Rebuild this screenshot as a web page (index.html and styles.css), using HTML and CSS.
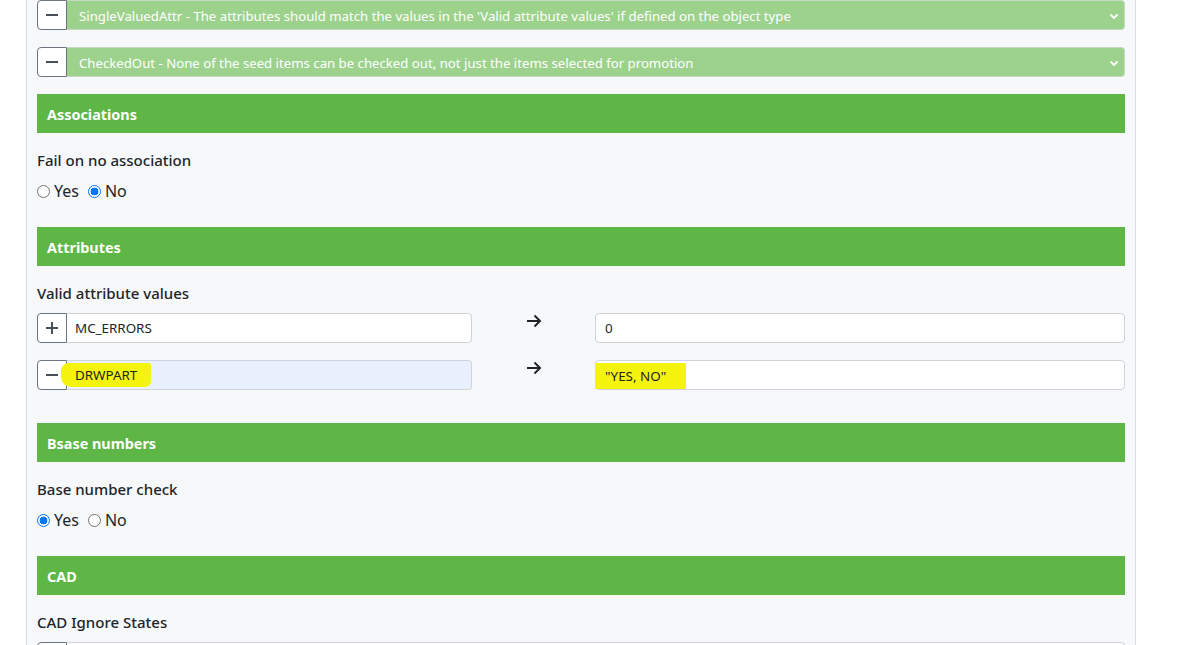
FILE: index.html
```html
<!DOCTYPE html>
<html>
<head>
<meta charset="utf-8">
<link rel="stylesheet" href="styles.css">
</head>
<body>
<div class="panel">
  <div class="rule-row">
    <button class="btn-side"><span class="minus"></span></button>
    <div class="rule-select">SingleValuedAttr - The attributes should match the values in the 'Valid attribute values' if defined on the object type<svg class="chev" width="10" height="8" viewBox="0 0 10 8"><path d="M1.5 2.5 L5 6 L8.5 2.5" fill="none" stroke="#fff" stroke-width="1.8"/></svg></div>
  </div>
  <div class="rule-row">
    <button class="btn-side"><span class="minus"></span></button>
    <div class="rule-select">CheckedOut - None of the seed items can be checked out, not just the items selected for promotion<svg class="chev" width="10" height="8" viewBox="0 0 10 8"><path d="M1.5 2.5 L5 6 L8.5 2.5" fill="none" stroke="#fff" stroke-width="1.8"/></svg></div>
  </div>

  <div class="section-head">Associations</div>
  <div class="field">
    <div class="label">Fail on no association</div>
    <div class="radios">
      <label class="radio"><span class="rb"></span>Yes</label>
      <label class="radio"><span class="rb on"></span>No</label>
    </div>
  </div>

  <div class="section-head">Attributes</div>
  <div class="field">
    <div class="label">Valid attribute values</div>
    <div class="attr-row">
      <div class="group">
        <button class="btn-side"><span class="plus"></span></button>
        <div class="input">MC_ERRORS</div>
      </div>
      <div class="arrow"><svg width="16" height="14" viewBox="0 0 16 14"><path d="M1 7 H14 M8.5 1.5 L14 7 L8.5 12.5" fill="none" stroke="#212529" stroke-width="2"/></svg></div>
      <div class="input wide">0</div>
    </div>
    <div class="attr-row">
      <div class="group">
        <button class="btn-side"><span class="minus"></span></button>
        <div class="input auto"><span class="hl hl-left">DRWPART</span></div>
      </div>
      <div class="arrow"><svg width="16" height="14" viewBox="0 0 16 14"><path d="M1 7 H14 M8.5 1.5 L14 7 L8.5 12.5" fill="none" stroke="#212529" stroke-width="2"/></svg></div>
      <div class="input wide"><span class="hl hl-right">"YES, NO"</span></div>
    </div>
  </div>

  <div class="section-head">Bsase numbers</div>
  <div class="field">
    <div class="label">Base number check</div>
    <div class="radios">
      <label class="radio"><span class="rb on"></span>Yes</label>
      <label class="radio"><span class="rb"></span>No</label>
    </div>
  </div>

  <div class="section-head">CAD</div>
  <div class="field">
    <div class="label">CAD Ignore States</div>
    <div class="attr-row">
      <div class="group full">
        <button class="btn-side"><span class="plus"></span></button>
        <div class="input"></div>
      </div>
    </div>
  </div>
</div>
</body>
</html>
```
FILE: styles.css
```css
* { box-sizing: border-box; }
html, body { margin: 0; padding: 0; background: #fff; }
body {
  font-family: "Noto Sans", "Open Sans", sans-serif;
  color: #212529;
  height: 645px;
  overflow: hidden;
}
.panel {
  margin-left: 26px;
  width: 1110px;
  min-height: 700px;
  background: #f7f8fa;
  border-left: 1px solid #dadcdf;
  border-right: 1px solid #dadcdf;
  padding: 0 10px 0 10px;
}
.rule-row {
  display: flex;
  height: 30px;
  margin-bottom: 17px;
}
.btn-side {
  width: 30px;
  height: 30px;
  flex: none;
  border: 1px solid #6c757d;
  border-radius: 4px 0 0 4px;
  background: #fff;
  padding: 0;
  display: flex;
  align-items: center;
  justify-content: center;
  position: relative;
  z-index: 0;
}
.minus {
  display: block;
  width: 12px;
  height: 2px;
  background: #495057;
}
.plus {
  display: block;
  width: 12px;
  height: 12px;
  position: relative;
}
.plus::before, .plus::after {
  content: "";
  position: absolute;
  background: #495057;
}
.plus::before { left: 0; top: 5px; width: 12px; height: 2px; }
.plus::after { left: 5px; top: 0; width: 2px; height: 12px; }
.rule-select {
  flex: 1;
  height: 30px;
  background: #9dd28c;
  border: 1px solid #c6d9c0;
  border-left: none;
  border-radius: 0 4px 4px 0;
  color: #fff;
  font-size: 13.2px;
  padding-left: 12px;
  padding-top: 2px;
  display: flex;
  align-items: center;
  white-space: nowrap;
}
.chev { margin-left: auto; margin-right: 5px; }
.section-head {
  height: 39px;
  background: #5db645;
  color: #fff;
  font-weight: 700;
  font-size: 14.4px;
  display: flex;
  align-items: center;
  padding-left: 10px;
  padding-top: 2px;
}
.field {
  padding-top: 16px;
  padding-bottom: 16px;
}
.label {
  font-size: 15px;
  font-weight: 500;
  line-height: 22px;
  margin-bottom: 9px;
}
.radios {
  display: flex;
  gap: 9px;
  font-size: 16px;
  line-height: 20px;
  margin-top: 10px;
  margin-bottom: 10px;
}
.radio {
  display: flex;
  align-items: center;
  gap: 4px;
}
.rb {
  width: 13px;
  height: 13px;
  border-radius: 50%;
  border: 1px solid #767676;
  background: #fff;
  display: inline-block;
}
.rb.on {
  border: 1px solid #0075ff;
  background: radial-gradient(circle, #0075ff 0 3.6px, #fff 4.2px);
}
.attr-row {
  display: flex;
  align-items: flex-start;
  height: 30px;
  margin-bottom: 17px;
}
.group {
  display: flex;
  width: 435px;
}
.group.full { width: 1088px; }
.input {
  flex: 1;
  height: 30px;
  background: #fff;
  border: 1px solid #ced4da;
  border-radius: 0 4px 4px 0;
  font-size: 13.4px;
  color: #212529;
  padding-left: 8px;
  display: flex;
  align-items: center;
}
.group .input { border-left: none; }
.input.auto { background: #e8f0fe; }
.input.wide {
  flex: none;
  width: 530px;
  border-radius: 4px;
  padding-left: 9px;
}
.arrow {
  width: 123px;
  display: flex;
  justify-content: center;
  padding-top: 1px;
}
.hl {
  background: #f4f40f;
  display: inline-flex;
  align-items: center;
  height: 24px;
  position: relative;
  z-index: 1;
}
.hl-left { margin-left: -14px; padding: 0 14px 0 14px; border-radius: 8px 2px 6px 10px; }
.hl-right { margin-left: -10px; padding: 0 20px 0 10px; height: 26px; margin-top: 2px; }
```
